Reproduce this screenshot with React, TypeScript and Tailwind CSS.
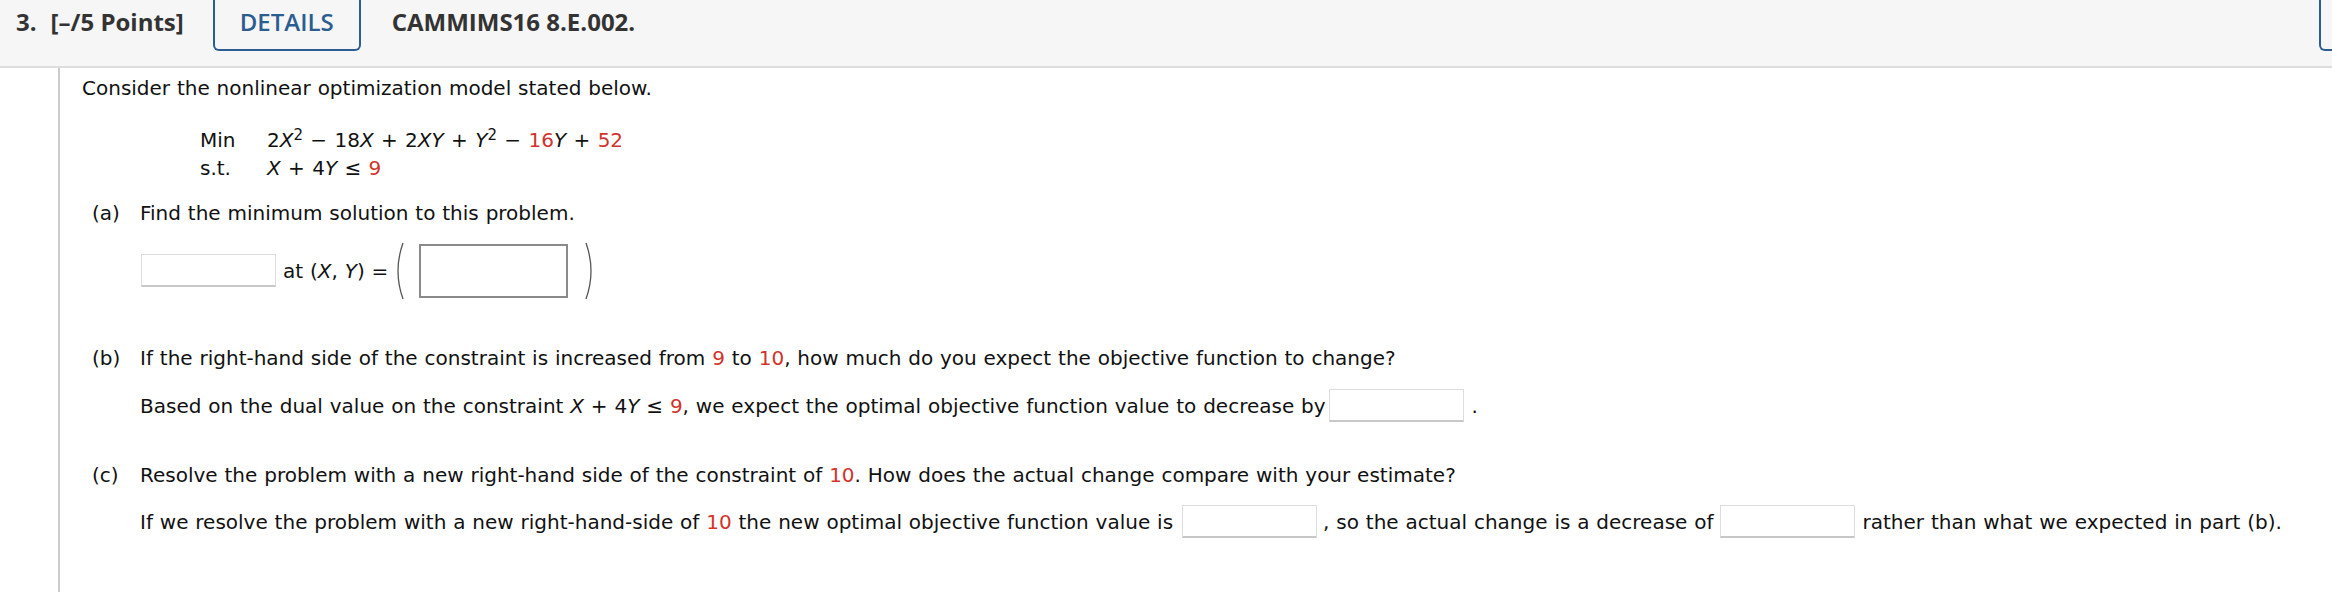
import React from "react";

const red = "text-[#d0342c]";

function I({ children }: { children: React.ReactNode }) {
  return <span className="italic">{children}</span>;
}

function Blank({ w = "w-[135px]" }: { w?: string }) {
  return (
    <span
      className={`inline-block ${w} h-[33px] border border-[#dddddd] border-b-2 border-b-[#c8c8c8] bg-white align-middle`}
    />
  );
}

function Paren({ flip = false }: { flip?: boolean }) {
  return (
    <svg width="12" height="58" viewBox="0 0 12 58" className="shrink-0">
      <path
        d={flip ? "M2 1 Q12 29 2 57" : "M10 1 Q0 29 10 57"}
        fill="none"
        stroke="#555"
        strokeWidth="1.3"
      />
    </svg>
  );
}

export default function App() {
  return (
    <div className="w-[2332px] h-[592px] overflow-hidden bg-white text-[#111] font-['DejaVu_Sans',Verdana,sans-serif] [word-spacing:0.5px]">
      {/* header bar */}
      <div className="h-[68px] bg-[#f6f6f6] border-b-2 border-[#dddddd] flex items-start font-['Open_Sans',sans-serif] text-[#333] font-bold text-[24px] [word-spacing:0px]">
        <div className="ml-[16px] h-[43px] flex items-center">
          <span>3.</span>
          <span className="ml-[14px]">[–/5 Points]</span>
        </div>
        <div className="ml-[29px] w-[148px] h-[51px] border-2 border-t-0 border-[#2c5d90] rounded-b-md text-[#2c5d90] font-semibold flex justify-center">
          <span className="h-[43px] leading-[43px]">DETAILS</span>
        </div>
        <div className="ml-[31px] h-[43px] flex items-center">CAMMIMS16 8.E.002.</div>
        <div className="flex-1" />
        <div className="w-[13px] h-[51px] border-l-2 border-b-2 border-[#2c5d90] rounded-bl-md" />
      </div>

      {/* body */}
      <div className="flex h-[524px]">
        <div className="w-[58px] shrink-0" />
        <div className="flex-1 border-l-2 border-[#cccccc] pl-[22px] pt-[6px] text-[20px] leading-[28px]">
          <p>Consider the nonlinear optimization model stated below.</p>

          <div className="mt-[24px] ml-[118px]">
            <div className="flex">
              <span className="w-[67px]">Min</span>
              <span className="[word-spacing:1px]">
                2<I>X</I>
                <sup>2</sup> − 18<I>X</I> + 2<I>XY</I> + <I>Y</I>
                <sup>2</sup> − <span className={red}>16</span>
                <I>Y</I> + <span className={red}>52</span>
              </span>
            </div>
            <div className="flex">
              <span className="w-[67px]">s.t.</span>
              <span className="[word-spacing:1px]">
                <I>X</I> + 4<I>Y</I> ≤ <span className={red}>9</span>
              </span>
            </div>
          </div>

          <div className="mt-[17px] flex ml-[10px]">
            <span className="w-[48px]">(a)</span>
            <span>Find the minimum solution to this problem.</span>
          </div>

          <div className="mt-[14px] ml-[59px] flex items-center h-[59px]">
            <Blank />
            <span className="ml-[7px]">
              at (<I>X</I>, <I>Y</I>) =
            </span>
            <span className="ml-[5px]">
              <Paren />
            </span>
            <span className="ml-[14px] w-[149px] h-[54px] border-2 border-[#8a8a8a] bg-white" />
            <span className="ml-[16px]">
              <Paren flip />
            </span>
          </div>

          <div className="mt-[44px] flex ml-[10px]">
            <span className="w-[48px]">(b)</span>
            <span>
              If the right-hand side of the constraint is increased from <span className={red}>9</span> to{" "}
              <span className={red}>10</span>, how much do you expect the objective function to change?
            </span>
          </div>

          <div className="mt-[17px] ml-[58px] flex items-center h-[33px]">
            <span>
              Based on the dual value on the constraint <I>X</I> + 4<I>Y</I> ≤ <span className={red}>9</span>,
              we expect the optimal objective function value to decrease by
            </span>
            <span className="ml-[3px]">
              <Blank />
            </span>
            <span className="ml-[8px]">.</span>
          </div>

          <div className="mt-[39px] flex ml-[10px]">
            <span className="w-[48px]">(c)</span>
            <span>
              Resolve the problem with a new right-hand side of the constraint of{" "}
              <span className={red}>10</span>. How does the actual change compare with your estimate?
            </span>
          </div>

          <div className="mt-[16px] ml-[58px] flex items-center h-[33px] whitespace-nowrap">
            <span>
              If we resolve the problem with a new right-hand-side of <span className={red}>10</span> the new
              optimal objective function value is
            </span>
            <span className="ml-[9px]">
              <Blank />
            </span>
            <span className="ml-[6px]">, so the actual change is a decrease of</span>
            <span className="ml-[6px]">
              <Blank />
            </span>
            <span className="ml-[8px]">rather than what we expected in part (b).</span>
          </div>
        </div>
      </div>
    </div>
  );
}
